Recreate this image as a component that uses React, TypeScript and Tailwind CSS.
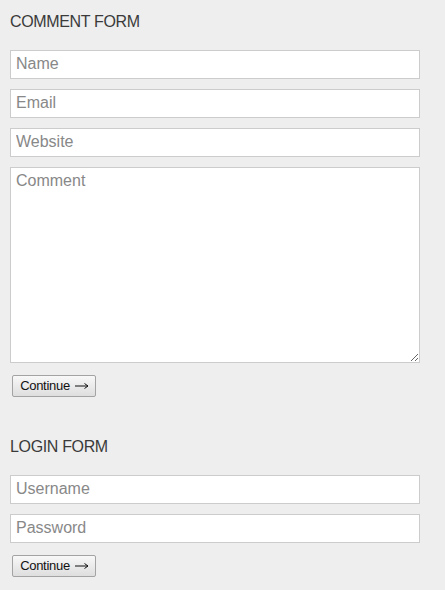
import React, { useState } from "react";

const inputCls =
  "block w-[410px] h-[29px] mb-[10px] px-[5px] pt-[3px] pb-[5px] leading-[19px] text-[16px] text-[#333] bg-white border border-[#cccccc] outline-none placeholder:text-[#888888]";

const buttonCls =
  "flex items-center justify-center gap-[5px] ml-[2px] h-[22px] w-[84px] px-0 pl-[1px] text-[13px] leading-[20px] tracking-[-0.3px] text-[#111] border border-[#a3a3a3] rounded-[2px] bg-gradient-to-b from-[#f8f8f8] to-[#dedede]";

function Arrow() {
  return (
    <svg width="14" height="8" viewBox="0 0 14 8" fill="none" stroke="#111" strokeWidth="1">
      <path d="M0 4h13" />
      <path d="M9.5 1.5L13 4L9.5 6.5" />
    </svg>
  );
}

function App() {
  const [comment, setComment] = useState({ name: "", email: "", website: "", comment: "" });
  const [login, setLogin] = useState({ username: "", password: "" });

  return (
    <div
      className="min-h-screen bg-[#eeeeee] px-[10px] pt-[10px]"
      style={{ fontFamily: '"Liberation Sans", Arial, sans-serif' }}
    >
      <form onSubmit={(e) => e.preventDefault()}>
        <h2 className="text-[16px] leading-[24px] mb-[16px] text-[#3a3a3a] tracking-[-0.35px]">
          COMMENT FORM
        </h2>
        <input
          className={inputCls}
          placeholder="Name"
          value={comment.name}
          onChange={(e) => setComment({ ...comment, name: e.target.value })}
        />
        <input
          className={inputCls}
          placeholder="Email"
          value={comment.email}
          onChange={(e) => setComment({ ...comment, email: e.target.value })}
        />
        <input
          className={inputCls}
          placeholder="Website"
          value={comment.website}
          onChange={(e) => setComment({ ...comment, website: e.target.value })}
        />
        <textarea
          className="block w-[410px] h-[196px] mb-[12px] px-[5px] pt-[3px] leading-[20px] text-[16px] text-[#333] bg-white border border-[#cccccc] outline-none placeholder:text-[#888888]"
          placeholder="Comment"
          value={comment.comment}
          onChange={(e) => setComment({ ...comment, comment: e.target.value })}
        />
        <button type="submit" className={buttonCls}>
          Continue <Arrow />
        </button>
      </form>

      <form onSubmit={(e) => e.preventDefault()} className="mt-[38px]">
        <h2 className="text-[16px] leading-[24px] mb-[16px] text-[#3a3a3a] tracking-[-0.35px]">
          LOGIN FORM
        </h2>
        <input
          className={inputCls}
          placeholder="Username"
          value={login.username}
          onChange={(e) => setLogin({ ...login, username: e.target.value })}
        />
        <input
          type="password"
          className={inputCls}
          placeholder="Password"
          value={login.password}
          onChange={(e) => setLogin({ ...login, password: e.target.value })}
        />
        <button type="submit" className={`${buttonCls} mt-[12px]`}>
          Continue <Arrow />
        </button>
      </form>
    </div>
  );
}

export default App;
